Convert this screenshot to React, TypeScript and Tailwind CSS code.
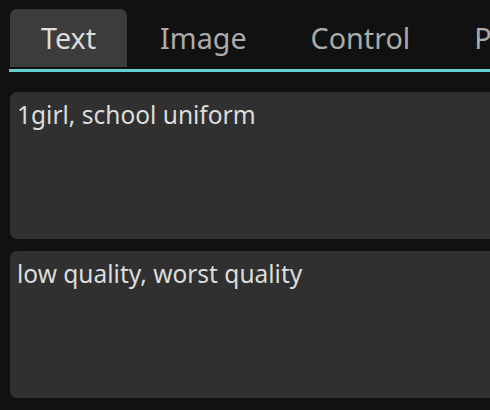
import React from "react";

export default function App() {
  const tabs = ["Text", "Image", "Control", "Prompt"];
  return (
    <div className="w-[490px] h-[410px] overflow-hidden bg-[#111111]" style={{ fontFamily: '"Noto Sans", "Open Sans", sans-serif' }}>
      <div className="pl-[9px] pt-[9px] w-[700px]">
        <div className="flex gap-[2px] pl-[1px]">
          {tabs.map((t, i) => (
            <div
              key={t}
              className={
                i === 0
                  ? "h-[58px] px-[31px] flex items-center rounded-t-[7px] bg-[#3c3c3c] text-[#dddddd] text-[28.7px] whitespace-nowrap"
                  : "h-[58px] px-[31px] flex items-center text-[#ababab] text-[28.7px] whitespace-nowrap"
              }
            >
              {t}
            </div>
          ))}
        </div>
        <div className="h-[3px] mt-[2px] bg-[#62d0d0]" />
        <div className="pl-[1px] mt-[20px] flex flex-col gap-[12px]">
          <div className="h-[147px] rounded-[7px] bg-[#303030] px-[7px] pt-[6px] text-[24.5px] leading-[34px] text-[#dddddd]">
            1girl, school uniform
          </div>
          <div className="h-[147px] rounded-[7px] bg-[#303030] px-[7px] pt-[6px] text-[24.5px] leading-[34px] text-[#dddddd]">
            low quality, worst quality
          </div>
        </div>
      </div>
    </div>
  );
}
